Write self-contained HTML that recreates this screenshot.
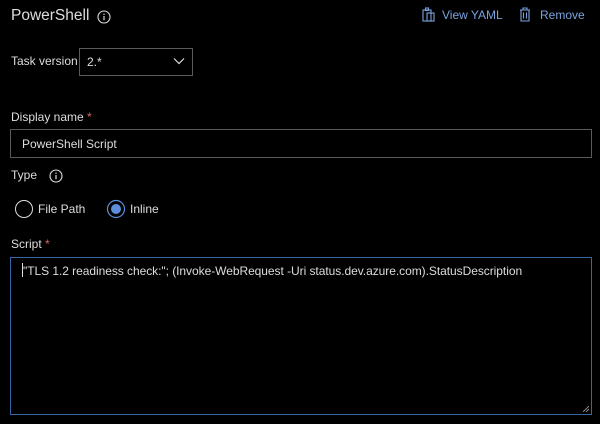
<!DOCTYPE html>
<html><head><style>
body{margin:0;width:600px;height:424px;background:#000;color:#ddd;font-family:"Liberation Sans",sans-serif;position:relative;overflow:hidden}
.a{position:absolute;white-space:nowrap}
.lbl{font-size:12px;color:#ddd}
.req{color:#e06666}
.box{position:absolute;border:1px solid #5a5a5a;box-sizing:border-box}
.blue{color:#7aa3dc;font-size:12px}
</style></head><body>
<div class="a" style="left:11px;top:7px;font-size:15.5px;color:#ddd">PowerShell</div>
<svg class="a" style="left:97px;top:10px" width="14" height="14" viewBox="0 0 14 14"><circle cx="7" cy="7" r="6" fill="none" stroke="#ddd" stroke-width="1.1"/><rect x="6.4" y="6" width="1.2" height="4.2" fill="#ddd"/><rect x="6.4" y="3.6" width="1.2" height="1.3" fill="#ddd"/></svg>

<svg class="a" style="left:422px;top:7px" width="14" height="15" viewBox="0 0 14 15" fill="none" stroke="#7aa3dc" stroke-width="1.1"><rect x="1" y="3" width="8" height="11"/><rect x="5" y="6" width="7" height="8"/><rect x="3.5" y="1" width="3" height="2.5"/></svg>
<div class="a blue" style="left:442px;top:8px">View YAML</div>
<svg class="a" style="left:519px;top:7px" width="12" height="15" viewBox="0 0 12 15" fill="none" stroke="#7aa3dc" stroke-width="1.1"><path d="M1 3h10M4 3V1h4v2M2 3v11h8V3M4.5 5.5v6M7.5 5.5v6"/></svg>
<div class="a blue" style="left:540px;top:8px">Remove</div>

<div class="a lbl" style="left:11px;top:54px">Task version</div>
<div class="box" style="left:79px;top:48px;width:114px;height:28px"></div>
<div class="a lbl" style="left:87px;top:55px">2.*</div>
<svg class="a" style="left:173px;top:57px" width="12" height="8" viewBox="0 0 12 8"><path d="M1 1.5l5 5 5-5" fill="none" stroke="#ddd" stroke-width="1.2"/></svg>

<div class="a lbl" style="left:11px;top:110px">Display name <span class="req">*</span></div>
<div class="box" style="left:10px;top:129px;width:582px;height:29px"></div>
<div class="a lbl" style="left:22px;top:137px">PowerShell Script</div>

<div class="a lbl" style="left:11px;top:168px">Type</div>
<svg class="a" style="left:49px;top:169px" width="14" height="14" viewBox="0 0 14 14"><circle cx="7" cy="7" r="6" fill="none" stroke="#ddd" stroke-width="1.1"/><rect x="6.4" y="6" width="1.2" height="4.2" fill="#ddd"/><rect x="6.4" y="3.6" width="1.2" height="1.3" fill="#ddd"/></svg>

<svg class="a" style="left:14px;top:199px" width="20" height="20"><circle cx="10" cy="10" r="8.5" fill="none" stroke="#ddd" stroke-width="1"/></svg>
<div class="a lbl" style="left:38px;top:202px">File Path</div>
<svg class="a" style="left:106px;top:199px" width="20" height="20"><circle cx="10" cy="10" r="8.5" fill="none" stroke="#5b8fd9" stroke-width="1.2"/><circle cx="10" cy="10" r="5" fill="#5b8fd9"/></svg>
<div class="a lbl" style="left:130px;top:202px">Inline</div>

<div class="a lbl" style="left:11px;top:237px">Script <span class="req">*</span></div>
<div class="box" style="left:10px;top:257px;width:582px;height:158px;border-color:#3a64a8"></div>
<div class="a" style="left:22px;top:263px;width:1px;height:14px;background:#ddd"></div>
<div class="a lbl" style="left:23px;top:264px;letter-spacing:-0.05px">"TLS 1.2 readiness check:"; (Invoke-WebRequest -Uri status.dev.azure.com).StatusDescription</div>
<svg class="a" style="left:583px;top:406px" width="6" height="6"><path d="M0 6L6 0M3 6L6 3" stroke="#888" stroke-width="1"/></svg>
</body></html>
